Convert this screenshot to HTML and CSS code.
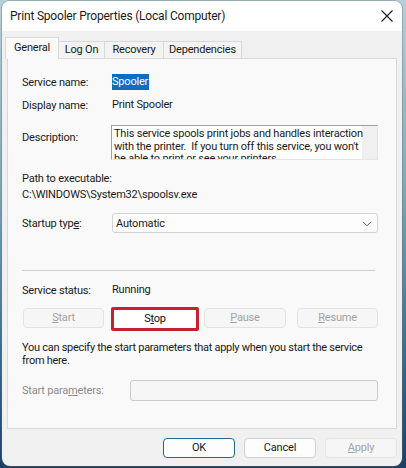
FILE: index.html
```html
<!DOCTYPE html>
<html>
<head>
<meta charset="utf-8">
<link rel="stylesheet" href="styles.css">
</head>
<body>
<div class="window">
  <div class="titlebar">
    <span class="title">Print Spooler Properties (Local Computer)</span>
    <svg class="close" width="14" height="14" viewBox="0 0 14 14"><path d="M1.5 1.5 L12.5 12.5 M12.5 1.5 L1.5 12.5" stroke="#1a1a1a" stroke-width="1.1" fill="none"/></svg>
  </div>
  <div class="tabs">
    <div class="tab active t1">General</div>
    <div class="tab t2">Log On</div>
    <div class="tab t3">Recovery</div>
    <div class="tab t4">Dependencies</div>
  </div>
  <div class="panel">
    <div class="row r1"><span class="label">Service name:</span><span class="value"><span class="selected">Spooler</span></span></div>
    <div class="row r2"><span class="label">Display name:</span><span class="value">Print Spooler</span></div>
    <div class="row r3"><span class="label desc-label">Description:</span>
      <div class="descbox"><div class="desctext">This service spools print jobs and handles interaction<br>with the printer.&nbsp; If you turn off this service, you won't<br>be able to print or see your printers.</div></div>
    </div>
    <div class="line r4">Path to executable:</div>
    <div class="line r5">C:\WINDOWS\System32\spoolsv.exe</div>
    <div class="row r6"><span class="label">Startup typ<u>e</u>:</span>
      <div class="select"><span>Automatic</span>
        <svg class="chev" width="10" height="6" viewBox="0 0 10 6"><path d="M1 0.8 L5 4.8 L9 0.8" stroke="#555" stroke-width="1" fill="none"/></svg>
      </div>
    </div>
    <div class="sep"></div>
    <div class="row r7"><span class="label">Service status:</span><span class="value">Running</span></div>
    <div class="btnrow">
      <div class="sbtn disabled b-start"><u>S</u>tart</div>
      <div class="sbtn b-stop">S<u>t</u>op</div>
      <div class="sbtn disabled b-pause"><u>P</u>ause</div>
      <div class="sbtn disabled b-resume"><u>R</u>esume</div>
    </div>
    <div class="note">You can specify the start parameters that apply when you start the service<br>from here.</div>
    <div class="row r10"><span class="label plabel">Start para<u>m</u>eters:</span><div class="input"></div></div>
  </div>
  <div class="footer">
    <div class="fbtn ok">OK</div>
    <div class="fbtn">Cancel</div>
    <div class="fbtn disabled"><u>A</u>pply</div>
  </div>
</div>
</body>
</html>
```
FILE: styles.css
```css
html, body {
  margin: 0;
  padding: 0;
}
body {
  width: 406px;
  height: 468px;
  overflow: hidden;
  background: linear-gradient(180deg, #b7cfd6 0%, #7fa7b5 40%, #3b6f8c 75%, #1c3f63 100%);
  font-family: Roboto, "Segoe UI", "Liberation Sans", sans-serif;
  font-size: 11px;
  letter-spacing: -0.2px;
  color: #1a1a1a;
}
.window {
  margin: 1px 0 0 2px;
  width: 400px;
  height: 465px;
  background: #f0f0f0;
  border-radius: 8px;
  overflow: hidden;
  box-shadow: 0 0 0 1px rgba(90, 110, 120, 0.35);
  display: flex;
  flex-direction: column;
}
.titlebar {
  height: 30px;
  flex: none;
  background: #ffffff;
  display: flex;
  align-items: center;
  justify-content: space-between;
  padding: 0 6px 0 8px;
}
.title {
  font-size: 12px;
  color: #1a1a1a;
  margin-top: -1px;
}
.close {
  margin-top: -1px;
  margin-right: 2px;
}
.tabs {
  height: 20px;
  padding: 7px 0 0 3px;
  display: flex;
  align-items: flex-end;
  flex: none;
  position: relative;
  z-index: 1;
}
.tab {
  height: 16px;
  line-height: 16px;
  background: #f3f3f3;
  border: 1px solid #d9d9d9;
  border-bottom: none;
  margin-left: -1px;
  color: #1a1a1a;
  text-align: center;
  white-space: nowrap;
  flex: none;
}
.tab.active {
  height: 21px;
  line-height: 19px;
  background: #f9f9f9;
  margin-bottom: -1px;
  margin-left: 0;
  position: relative;
  z-index: 2;
}
.t1 { width: 52px; }
.t2 { width: 45px; }
.t3 { width: 58px; }
.t4 { width: 77px; }
.panel {
  margin: 0 5px;
  height: 369px;
  background: #f9f9f9;
  border: 1px solid #d9d9d9;
  padding: 0 18px 0 14px;
  display: flex;
  flex-direction: column;
  flex: none;
}
.row {
  display: flex;
  align-items: center;
}
.label {
  width: 90px;
  flex: none;
}
.value {
  line-height: 16px;
}
.selected {
  background: #0a6fc2;
  color: #ffffff;
  padding: 1px 1px 2px 0;
}
.r1 { margin-top: 15px; height: 16px; }
.r2 { margin-top: 7px; height: 16px; }
.r3 { margin-top: 12px; height: 35px; align-items: flex-start; }
.desc-label { margin-top: 5px; line-height: 16px; }
.descbox {
  margin-left: -1px;
  width: 266px;
  height: 33px;
  border: 1px solid;
  border-color: #a0a0a0 #e4e4e4 #e4e4e4 #a0a0a0;
  background: linear-gradient(90deg, #ffffff 0, #ffffff 250px, #f0f0f0 250px);
  overflow: hidden;
}
.desctext {
  padding: 2px 0 0 2px;
  line-height: 12.5px;
  white-space: nowrap;
}
.line {
  height: 16px;
  line-height: 16px;
}
.r4 { margin-top: 11px; }
.r5 { margin-top: 0; }
.r6 { margin-top: 10px; height: 20px; }
.select {
  width: 262px;
  height: 18px;
  border: 1px solid #d3d3d3;
  border-radius: 3px;
  background: #fdfdfd;
  display: flex;
  align-items: center;
  justify-content: space-between;
  padding: 0 5px 0 3px;
}
.chev { margin-top: 1px; }
.sep {
  margin-top: 37px;
  height: 1px;
  width: 353px;
  background: #cfcfcf;
  flex: none;
}
.r7 { margin-top: 11px; height: 16px; }
.btnrow {
  margin-top: 10px;
  height: 20px;
  display: flex;
  align-items: flex-start;
  flex: none;
}
.sbtn {
  height: 18px;
  line-height: 18px;
  border: 1px solid #d0d0d0;
  border-radius: 4px;
  background: #fdfdfd;
  text-align: center;
  flex: none;
}
.sbtn.disabled {
  color: #a3a3a3;
  background: #f6f6f6;
  border-color: #e3e3e3;
}
.b-start { width: 79px; margin-left: 1px; }
.b-stop {
  width: 82px;
  height: 18px;
  margin-left: 7px;
  margin-top: -1px;
  border: 3px solid #c8202f;
  border-radius: 2px;
  background: #ffffff;
  color: #111;
  line-height: 18px;
}
.b-pause { width: 80px; margin-left: 5px; }
.b-resume { width: 79px; margin-left: 11px; }
.note {
  margin-top: 13px;
  line-height: 13px;
  white-space: nowrap;
  letter-spacing: -0.28px;
}
.r10 { margin-top: 13px; height: 21px; }
.plabel { width: 108px; color: #8c8c8c; }
.input {
  width: 247px;
  height: 19px;
  border: 1px solid #cbcbcb;
  border-radius: 3px;
  background: #f6f6f6;
}
.footer {
  display: flex;
  justify-content: flex-end;
  gap: 9px;
  padding: 9px 5px 0 0;
}
.fbtn {
  width: 70px;
  height: 18px;
  line-height: 18px;
  border: 1px solid #d0d0d0;
  border-radius: 4px;
  background: #fdfdfd;
  text-align: center;
}
.fbtn.ok {
  border-color: #1f6c8f;
}
.fbtn.disabled {
  color: #a3a3a3;
  background: #f6f6f6;
  border-color: #e3e3e3;
}
u {
  text-decoration: underline;
  text-underline-offset: 1px;
}
```
